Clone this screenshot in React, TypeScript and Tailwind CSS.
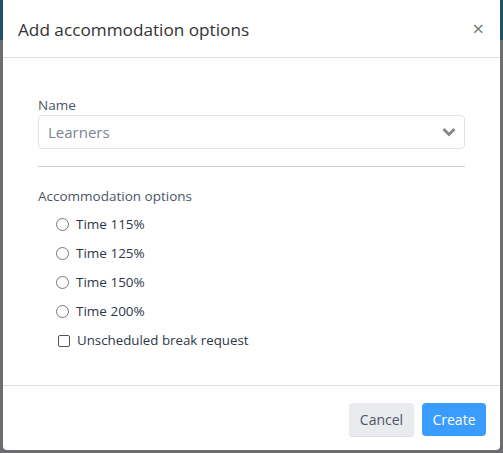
import React, { useState } from 'react';

const OPTIONS = ['Time 115%', 'Time 125%', 'Time 150%', 'Time 200%'];

export default function App() {
  const [selected, setSelected] = useState<string | null>(null);
  const [breakRequest, setBreakRequest] = useState(false);

  return (
    <div
      className="h-[453px] w-[503px] overflow-hidden bg-[linear-gradient(to_bottom,#1f5266_0,#1f5266_40px,#6d6d70_40px)] pl-[3px] pr-[3px] font-['Segoe_UI','Open_Sans',sans-serif]"
    >
      <div className="flex h-[450px] flex-col rounded-b-[4px] bg-white">
        {/* header */}
        <div className="flex h-[58px] items-center justify-between border-b border-[#dedede] pl-[15px] pr-[16px]">
          <h2 className="pt-[2px] text-[17.2px] leading-none text-[#333]">Add accommodation options</h2>
          <button className="text-[20px] leading-none text-[#777]">×</button>
        </div>

        {/* body */}
        <div className="flex-1 pl-[35px] pr-[35px] pt-[38px]">
          <label className="block text-[13.5px] leading-[18px] text-[#4a5568]">Name</label>
          <div className="mt-[1px] flex h-[34px] items-center justify-between rounded-[4px] border border-[#e3e3e3] pl-[9px] pr-[8px]">
            <span className="text-[15px] text-[#7b8494]">Learners</span>
            <svg width="14" height="10" viewBox="0 0 14 10">
              <polyline points="1.5,2 7,7.5 12.5,2" fill="none" stroke="#888" strokeWidth="3" />
            </svg>
          </div>
          <div className="mt-[17px] h-px bg-[#cfcfcf]" />

          <div className="mt-[20px] text-[13.5px] leading-[18px] text-[#4a5568]">Accommodation options</div>
          <div className="mt-[5px] flex flex-col pl-[18px]">
            {OPTIONS.map((o) => (
              <label key={o} className="flex h-[29px] cursor-pointer items-center gap-[7px]">
                <span
                  onClick={() => setSelected(o)}
                  className="flex h-[13px] w-[13px] items-center justify-center rounded-full border border-[#777]"
                >
                  {selected === o && <span className="h-[7px] w-[7px] rounded-full bg-[#333]" />}
                </span>
                <span className="text-[13.5px] text-[#2d3748]">{o}</span>
              </label>
            ))}
            <label
              onClick={() => setBreakRequest(!breakRequest)}
              className="flex h-[29px] cursor-pointer items-center gap-[7px] pl-[2px]"
            >
              <span className="flex h-[12px] w-[12px] items-center justify-center rounded-[2px] border border-[#555]">
                {breakRequest && <span className="text-[10px] leading-none">✓</span>}
              </span>
              <span className="text-[13.3px] text-[#2d3748]">Unscheduled break request</span>
            </label>
          </div>
        </div>

        {/* footer */}
        <div className="flex h-[65px] items-start justify-end gap-[8px] border-t border-[#dedede] pr-[14px] pt-[17px]">
          <button className="h-[33px] w-[65px] rounded-[4px] bg-[#e9ebee] text-[14px] text-[#4a5568] shadow-[0_1px_1px_rgba(0,0,0,0.15)]">
            Cancel
          </button>
          <button className="h-[33px] w-[64px] rounded-[4px] bg-[#3a9cff] text-[14px] text-white">Create</button>
        </div>
      </div>
    </div>
  );
}
